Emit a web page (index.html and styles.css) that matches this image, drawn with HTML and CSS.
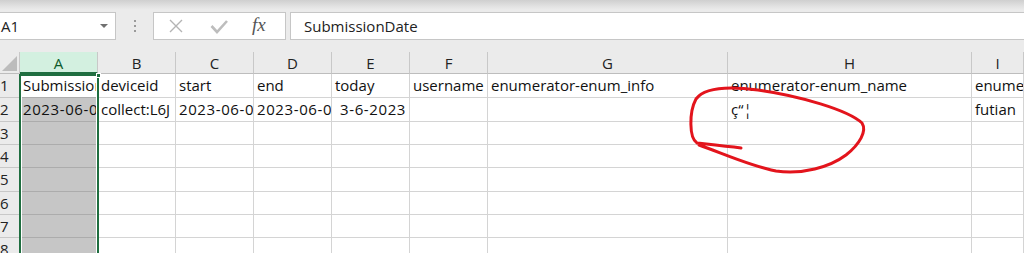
FILE: index.html
```html
<!DOCTYPE html>
<html>
<head>
<meta charset="utf-8">
<link rel="stylesheet" href="styles.css">
</head>
<body>
<div class="app">
  <div class="ribbon-edge"></div>
  <div class="fbar">
    <div class="namebox"><span class="nb-text">A1</span><span class="nb-arrow"></span></div>
    <div class="grip"><i></i><i></i><i></i></div>
    <div class="fbtns">
      <svg class="ic ic-x" width="16" height="16" viewBox="0 0 16 16"><path d="M2 2 L14 14 M14 2 L2 14" stroke="#b4b4b4" stroke-width="1.4" fill="none"/></svg>
      <svg class="ic ic-ok" width="18" height="14" viewBox="0 0 18 14"><path d="M1.5 6 L7 12 L17 1" stroke="#bdbdbd" stroke-width="2.6" fill="none"/></svg>
      <span class="fx">fx</span>
    </div>
    <div class="finput">SubmissionDate</div>
  </div>
  <div class="sheet">
    <div class="corner"><span class="tri"></span></div>
    <div class="ch sel">A</div>
    <div class="ch">B</div>
    <div class="ch">C</div>
    <div class="ch">D</div>
    <div class="ch">E</div>
    <div class="ch">F</div>
    <div class="ch">G</div>
    <div class="ch">H</div>
    <div class="ch">I</div>

    <div class="rh">1</div>
    <div class="c ca act">Submission</div>
    <div class="c">deviceid</div>
    <div class="c">start</div>
    <div class="c">end</div>
    <div class="c">today</div>
    <div class="c">username</div>
    <div class="c">enumerator-enum_info</div>
    <div class="c">enumerator-enum_name</div>
    <div class="c">enume</div>

    <div class="rh">2</div>
    <div class="c ca dt">2023-06-0</div>
    <div class="c">collect:L6J</div>
    <div class="c dt">2023-06-0</div>
    <div class="c dt">2023-06-0</div>
    <div class="c num dt">3-6-2023</div>
    <div class="c"></div>
    <div class="c"></div>
    <div class="c">ç“¦</div>
    <div class="c">futian</div>

    <div class="rh">3</div><div class="c ca"></div><div class="c"></div><div class="c"></div><div class="c"></div><div class="c"></div><div class="c"></div><div class="c"></div><div class="c"></div><div class="c"></div>
    <div class="rh">4</div><div class="c ca"></div><div class="c"></div><div class="c"></div><div class="c"></div><div class="c"></div><div class="c"></div><div class="c"></div><div class="c"></div><div class="c"></div>
    <div class="rh">5</div><div class="c ca"></div><div class="c"></div><div class="c"></div><div class="c"></div><div class="c"></div><div class="c"></div><div class="c"></div><div class="c"></div><div class="c"></div>
    <div class="rh">6</div><div class="c ca"></div><div class="c"></div><div class="c"></div><div class="c"></div><div class="c"></div><div class="c"></div><div class="c"></div><div class="c"></div><div class="c"></div>
    <div class="rh">7</div><div class="c ca"></div><div class="c"></div><div class="c"></div><div class="c"></div><div class="c"></div><div class="c"></div><div class="c"></div><div class="c"></div><div class="c"></div>
    <div class="rh">8</div><div class="c ca"></div><div class="c"></div><div class="c"></div><div class="c"></div><div class="c"></div><div class="c"></div><div class="c"></div><div class="c"></div><div class="c"></div>

    <div class="selbox"><span class="handle"></span></div>
  </div>
  <svg class="scribble" width="1024" height="253" viewBox="0 0 1024 253">
    <path d="M741 148 C 725 146, 706 144, 697 143 C 689 138, 689 112, 696 99 C 704 88, 728 86, 758 90 C 800 96, 848 110, 862 123 C 867 131, 860 144, 846 155 C 830 167, 802 175, 776 171 C 750 166, 722 153, 699 145" stroke="#e3141c" stroke-width="3" fill="none" stroke-linecap="round" stroke-linejoin="round"/>
  </svg>
</div>
</body>
</html>
```
FILE: styles.css
```css
* { box-sizing: border-box; }
html, body { margin: 0; padding: 0; }
body {
  width: 1024px;
  height: 253px;
  overflow: hidden;
  background: #ebebeb;
  font-family: "Open Sans", "Noto Sans", sans-serif;
}
.app { position: relative; width: 1024px; height: 253px; overflow: hidden; }

.ribbon-edge {
  height: 10px;
  background: linear-gradient(#cfcfcf, #e4e4e4 70%, #ebebeb);
}

.fbar {
  display: flex;
  align-items: flex-start;
  height: 42px;
  padding-top: 2px;
}
.namebox {
  width: 116px;
  height: 28px;
  background: #fff;
  border: 1px solid #c6c6c6;
  border-left: none;
  display: flex;
  align-items: center;
  justify-content: space-between;
  padding: 0 7px 0 1px;
  font-size: 15px;
  color: #222;
}
.nb-arrow {
  width: 0; height: 0;
  border-left: 4px solid transparent;
  border-right: 4px solid transparent;
  border-top: 4px solid #707070;
}
.grip {
  width: 37px;
  height: 28px;
  display: flex;
  flex-direction: column;
  align-items: center;
  justify-content: center;
  gap: 3px;
}
.grip i { display: block; width: 2px; height: 2px; background: #9a9a9a; }
.fbtns {
  width: 133px;
  height: 28px;
  background: #fff;
  border: 1px solid #c6c6c6;
  display: flex;
  align-items: center;
  padding-left: 14px;
}
.ic-x { margin-right: 26px; }
.ic-ok { margin-right: 24px; margin-top: 1px; }
.fx {
  font-family: "Liberation Serif", "DejaVu Serif", serif;
  font-style: italic;
  font-size: 19px;
  color: #555;
  margin-top: -3px;
}
.finput {
  flex: 1;
  margin-left: 4px;
  height: 28px;
  background: #fff;
  border: 1px solid #c6c6c6;
  border-right: none;
  font-size: 15px;
  color: #222;
  padding-left: 13px;
  line-height: 26px;
}

.sheet {
  position: relative;
  display: grid;
  grid-template-columns: 20px 78px 78px 78px 78px 78px 78px 240px 244px 1fr;
  grid-template-rows: 22px 24px 24px 23px 23px 24px 23px 23px 24px;
  background: #fff;
  font-size: 15px;
  color: #111;
}
.corner {
  background: #ebebeb;
  border-bottom: 1px solid #bdbdbd;
  border-right: 1px solid #c8c8c8;
  position: relative;
}
.tri {
  position: absolute;
  right: 2px; bottom: 2px;
  width: 0; height: 0;
  border-left: 15px solid transparent;
  border-bottom: 15px solid #bcbcbc;
}
.ch {
  background: #ebebeb;
  border-bottom: 1px solid #bdbdbd;
  border-right: 1px solid #c8c8c8;
  text-align: center;
  line-height: 22px;
  color: #222;
}
.ch.sel {
  background: #d3f0e0;
  color: #0d5a2c;
  border-bottom: 2px solid #1f6e40;
}
.rh {
  background: #ebebeb;
  border-bottom: 1px solid #c8c8c8;
  border-right: 1px solid #bdbdbd;
  padding-left: 0;
  line-height: 22px;
  color: #222;
  overflow: hidden;
}
.c {
  border-bottom: 1px solid #d4d4d4;
  border-right: 1px solid #d4d4d4;
  padding: 0 2px 0 3px;
  white-space: nowrap;
  overflow: hidden;
  line-height: 22px;
}
.c.dt { letter-spacing: 0.6px; }
.c.num { text-align: right; padding-right: 3px; }
.c.ca { background: #c6c6c6; border-bottom-color: #acacac; }
.c.ca.act { background: #fff; }

.selbox {
  position: absolute;
  left: 19px;
  top: 22px;
  width: 80px;
  bottom: -2px;
  border: 2px solid #1f6e40;
  box-shadow: inset 0 0 0 1px #fff;
  pointer-events: none;
}
.handle {
  position: absolute;
  right: -4px;
  top: -3px;
  width: 5px;
  height: 5px;
  background: #1f6e40;
  border: 1px solid #fff;
}

.scribble { position: absolute; left: 0; top: 0; pointer-events: none; }
```
